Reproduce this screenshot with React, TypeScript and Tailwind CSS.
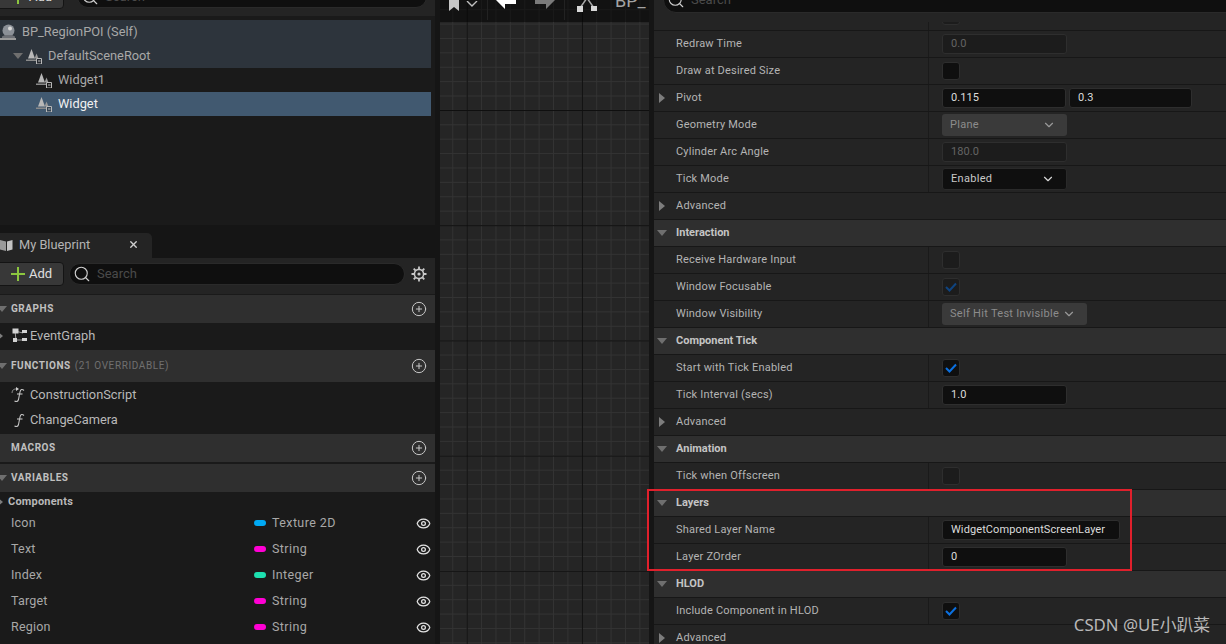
import type { ReactNode } from 'react';
import { ChevronDown, CirclePlus, Eye, Search, X } from 'lucide-react';

function ArrowDown({ className = '' }: { className?: string }) {
  return (
    <svg className={`shrink-0 ${className}`} width="10" height="6" viewBox="0 0 10 6">
      <path d="M0 0H10L5 6Z" fill="#6f6f6f" />
    </svg>
  );
}

function ArrowRight({ className = '' }: { className?: string }) {
  return (
    <svg className={`shrink-0 ${className}`} width="6" height="10" viewBox="0 0 6 10">
      <path d="M0 0L6 5L0 10Z" fill="#7d7d7d" />
    </svg>
  );
}

function PlusIcon() {
  return (
    <svg className="shrink-0" width="14" height="14" viewBox="0 0 14 14">
      <path d="M6 0H8V6H14V8H8V14H6V8H0V6H6Z" fill="#8cc63f" />
    </svg>
  );
}

function WidgetIcon() {
  return (
    <svg className="shrink-0" width="16" height="16" viewBox="0 0 16 16">
      <path d="M2 10.5L5.5 1L9 10.5Z" fill="#b8b8b8" />
      <path d="M8.5 10.5L10.5 5.5L12.5 10.5Z" fill="#9a9a9a" />
      <path d="M0 11.5H10V13H0Z" fill="#8a8a8a" />
      <path d="M10.5 10.5H15.5V16H10.5Z" fill="#1a1a1a" fillOpacity="0.35" stroke="#b8b8b8" strokeWidth="1" />
      <path d="M12 13H14.5" stroke="#b8b8b8" strokeWidth="1" />
    </svg>
  );
}

function SelfIcon() {
  return (
    <svg className="shrink-0" width="16" height="16" viewBox="0 0 16 16">
      <circle cx="8.5" cy="6.5" r="6" fill="#8b9097" />
      <circle cx="10" cy="4.5" r="2" fill="#d8d8d8" />
      <path d="M0 14H16V16H0Z" fill="#9a9a9a" />
      <path d="M2 12.5L5 11H12L15 12.5V14H2Z" fill="#6d7076" />
    </svg>
  );
}

function FuncIcon({ script = false }: { script?: boolean }) {
  return (
    <svg className="shrink-0" width="16" height="16" viewBox="0 0 16 16" fill="none">
      <path d="M13 3.5C11 1.5 9.5 2.5 9 5L7.5 12.5C7 14.5 5.5 15 3.5 14" stroke="#c4c4c4" strokeWidth="1.1" />
      <path d="M6 7H11.5" stroke="#c4c4c4" strokeWidth="1.1" />
      {script && <path d="M1 6C1 3 3 1.5 6 2" stroke="#8a8a8a" strokeWidth="1" />}
      {script && <path d="M5 0L8 2L5 4Z" fill="#d0d0d0" />}
    </svg>
  );
}

function GraphIcon() {
  return (
    <svg className="shrink-0" width="15" height="15" viewBox="0 0 15 15">
      <path d="M3 3L11 5M3 3L4 12M4 12L11 12" stroke="#9a9a9a" strokeWidth="1" fill="none" />
      <rect x="0.5" y="0.5" width="6" height="5" fill="#d2d2d2" />
      <rect x="10" y="2" width="5" height="3" fill="#d2d2d2" />
      <rect x="1" y="10" width="4" height="4" fill="#d2d2d2" />
      <rect x="10" y="10" width="5" height="3" fill="#d2d2d2" />
    </svg>
  );
}

function GearIcon() {
  return (
    <svg className="shrink-0" width="16" height="16" viewBox="0 0 16 16" fill="none">
      <circle cx="8" cy="8" r="4.6" stroke="#c8c8c8" strokeWidth="1.6" />
      <circle cx="8" cy="8" r="1.6" fill="#c8c8c8" />
      <path
        d="M8 0.5V3M8 13V15.5M0.5 8H3M13 8H15.5M2.7 2.7L4.5 4.5M11.5 11.5L13.3 13.3M13.3 2.7L11.5 4.5M4.5 11.5L2.7 13.3"
        stroke="#c8c8c8"
        strokeWidth="1.8"
      />
    </svg>
  );
}

function CheckBox({ state = 'off' }: { state?: 'off' | 'on' | 'dim' | 'offDark' }) {
  const bg = state === 'on' || state === 'offDark' ? 'bg-[#0f0f0f]' : 'bg-[#1c1c1c]';
  return (
    <div className={`w-[18px] h-[18px] shrink-0 rounded-[3px] border border-[#2e2e2e] flex items-center justify-center ${bg}`}>
      {(state === 'on' || state === 'dim') && (
        <svg width="12" height="10" viewBox="0 0 12 10" fill="none">
          <path d="M1 5L4.5 8.5L11 1.5" stroke={state === 'on' ? '#0b70e0' : '#0f4480'} strokeWidth="2" />
        </svg>
      )}
    </div>
  );
}

function Field({ text, width = 'w-[125px]', dim = false }: { text: string; width?: string; dim?: boolean }) {
  return (
    <div
      className={`h-[20px] rounded-[3px] border border-[#2e2e2e] pl-[8px] flex items-center text-[11px] tracking-[0.1px] ${width} ${
        dim ? 'bg-[#1c1c1c] text-[#646464]' : 'bg-[#0f0f0f] text-[#dcdcdc]'
      }`}
    >
      {text}
    </div>
  );
}

function Combo({ text, width = 'w-[125px]', dim = false }: { text: string; width?: string; dim?: boolean }) {
  return (
    <div
      className={`h-[22px] rounded-[3px] pl-[8px] pr-[11px] flex items-center justify-between text-[11px] tracking-[0.3px] ${width} ${
        dim ? 'bg-[#3a3a3a] text-[#8c8c8c]' : 'bg-[#0f0f0f] border border-[#2a2a2a] text-[#c8c8c8]'
      }`}
    >
      <span>{text}</span>
      <ChevronDown size={14} strokeWidth={2} color={dim ? '#9a9a9a' : '#d8d8d8'} />
    </div>
  );
}

type DetailRow = { label: string; value?: ReactNode; header?: boolean; arrow?: boolean };

const DETAIL_ROWS: DetailRow[] = [
  { label: 'Redraw Time', value: <Field text="0.0" dim /> },
  { label: 'Draw at Desired Size', value: <CheckBox state="offDark" /> },
  {
    label: 'Pivot',
    arrow: true,
    value: (
      <div className="flex gap-[3px]">
        <Field text="0.115" width="w-[124px]" />
        <Field text="0.3" width="w-[123px]" />
      </div>
    ),
  },
  { label: 'Geometry Mode', value: <Combo text="Plane" dim /> },
  { label: 'Cylinder Arc Angle', value: <Field text="180.0" dim /> },
  { label: 'Tick Mode', value: <Combo text="Enabled" /> },
  { label: 'Advanced', arrow: true },
  { label: 'Interaction', header: true },
  { label: 'Receive Hardware Input', value: <CheckBox /> },
  { label: 'Window Focusable', value: <CheckBox state="dim" /> },
  { label: 'Window Visibility', value: <Combo text="Self Hit Test Invisible" width="w-[145px]" dim /> },
  { label: 'Component Tick', header: true },
  { label: 'Start with Tick Enabled', value: <CheckBox state="on" /> },
  { label: 'Tick Interval (secs)', value: <Field text="1.0" /> },
  { label: 'Advanced', arrow: true },
  { label: 'Animation', header: true },
  { label: 'Tick when Offscreen', value: <CheckBox /> },
  { label: 'Layers', header: true },
  { label: 'Shared Layer Name', value: <Field text="WidgetComponentScreenLayer" width="w-[178px]" /> },
  { label: 'Layer ZOrder', value: <Field text="0" /> },
  { label: 'HLOD', header: true },
  { label: 'Include Component in HLOD', value: <CheckBox state="on" /> },
  { label: 'Advanced', arrow: true },
];

function DetailsRow({ row }: { row: DetailRow }) {
  if (row.header) {
    return (
      <div className="h-[27px] shrink-0 flex items-center bg-[#2f2f2f] border-b border-[#171717] text-[11px] font-bold text-[#c4c4c4]">
        <ArrowDown className="ml-[3px] mr-[9px]" />
        {row.label}
      </div>
    );
  }
  return (
    <div className="h-[27px] shrink-0 flex items-center bg-[#242424] border-b border-[#171717] text-[11px] tracking-[0.2px] text-[#b4b4b4]">
      <div className={`h-full w-[275px] shrink-0 flex items-center ${row.value ? 'border-r border-[#1a1a1a]' : ''}`}>
        <span className="w-[22px] pl-[5px]">{row.arrow && <ArrowRight />}</span>
        {row.label}
      </div>
      <div className="pl-[13px] flex items-center">{row.value}</div>
    </div>
  );
}

function DetailsPanel() {
  return (
    <div className="flex-1 ml-[5px] flex flex-col bg-[#242424] overflow-hidden">
      <div className="h-[13px] shrink-0 flex items-end pl-[9px] overflow-hidden bg-[#242424]">
        <div className="h-[26px] flex-1 -mr-[20px] shrink-0 rounded-full bg-[#0f0f0f] border border-[#2a2a2a] flex items-center pl-[3px] gap-[6px] text-[13px] text-[#4a4a4a]">
          <Search size={18} strokeWidth={1.5} color="#d0d0d0" />
          Search
        </div>
      </div>
      <div className="h-[9px] shrink-0" />
      <div className="h-[9px] shrink-0 flex overflow-hidden items-end border-b border-[#171717]">
        <div className="w-[275px] h-full shrink-0 border-r border-[#1a1a1a]" />
        <div className="pl-[13px] h-full flex items-end mb-[5px]">
          <CheckBox />
        </div>
      </div>
      {DETAIL_ROWS.map((row, i) => (
        <DetailsRow key={i} row={row} />
      ))}
    </div>
  );
}

function GraphPanel() {
  return (
    <div className="relative w-[209px] shrink-0 overflow-hidden bg-[#252525] bg-[linear-gradient(to_right,#0f0f0f_1px,transparent_1px),linear-gradient(to_bottom,#0f0f0f_1px,transparent_1px),linear-gradient(to_right,#333333_1px,transparent_1px),linear-gradient(to_bottom,#333333_1px,transparent_1px)] bg-[size:115.2px_115.2px,115.2px_115.2px,14.4px_14.4px,14.4px_14.4px] bg-[position:26.7px_0,0_110px,12.3px_0,0_9.2px]">
      <div className="absolute inset-x-0 top-0 h-[22px] bg-black/50 overflow-hidden">
        <div className="flex items-start h-full text-[#9a9a9a]">
          <svg className="ml-[9px] shrink-0" width="10" height="11" viewBox="0 0 10 11">
            <path d="M0 -4H10V11L5 7L0 11Z" fill="#c8c8c8" />
          </svg>
          <svg className="ml-[7px] mt-[1px] shrink-0" width="12" height="6" viewBox="0 0 12 6" fill="none">
            <path d="M1 0L6 5L11 0" stroke="#c0c0c0" strokeWidth="1.4" />
          </svg>
          <div className="ml-[9px] w-px h-[20px] bg-[#222222] shrink-0" />
          <svg className="ml-[8px] shrink-0" width="20" height="10" viewBox="0 0 20 10">
            <path d="M20 -3V4H9V9L0 0L9 -8V-3Z" fill="#ffffff" />
          </svg>
          <svg className="ml-[19px] shrink-0" width="20" height="10" viewBox="0 0 20 10">
            <path d="M0 -3V4H11V9L20 0L11 -8V-3Z" fill="#7a7a7a" />
          </svg>
          <div className="ml-[9px] w-px h-[20px] bg-[#222222] shrink-0" />
          <svg className="ml-[10px] shrink-0" width="25" height="13" viewBox="0 0 25 13">
            <path d="M5 8L12 -2L19 8" stroke="#a8a8a8" strokeWidth="1.5" fill="none" />
            <rect x="2" y="6" width="6" height="6" fill="#d8d8d8" />
            <rect x="16" y="6" width="6" height="5" fill="#d8d8d8" />
          </svg>
          <span className="ml-[15px] text-[18px] leading-[20px] -mt-[9px] text-[#a4a4a4] font-['Roboto',sans-serif] shrink-0">BP_</span>
        </div>
      </div>
    </div>
  );
}

function TreeRow({ bg, text, pad, children, color }: { bg: string; text: string; pad: string; children: ReactNode; color: string }) {
  return (
    <div className={`h-[24px] w-[431px] flex items-center text-[12.8px] ${bg} ${pad} ${color}`}>
      {children}
      <span>{text}</span>
    </div>
  );
}

function SectionHeader({ title, note, arrow = true, height }: { title: string; note?: string; arrow?: boolean; height: string }) {
  return (
    <div className={`shrink-0 flex items-center bg-[#2f2f2f] pl-[11px] pr-[8px] relative text-[10px] font-bold tracking-[0.55px] text-[#c0c0c0] ${height}`}>
      {arrow && <ArrowDown className="absolute left-0 top-1/2 -mt-[3px] -translate-x-[3px]" />}
      <span className="pb-[2px]">{title}</span>
      {note && <span className="ml-[4px] pb-[2px] font-normal tracking-[0.6px] text-[#707070]">{note}</span>}
      <CirclePlus size={16} color="#c8c8c8" strokeWidth={1.5} className="ml-auto" />
    </div>
  );
}

const VARIABLES = [
  { name: 'Icon', type: 'Texture 2D', color: 'bg-[#00a9f4]' },
  { name: 'Text', type: 'String', color: 'bg-[#ff00d4]' },
  { name: 'Index', type: 'Integer', color: 'bg-[#1de0b0]' },
  { name: 'Target', type: 'String', color: 'bg-[#ff00d4]' },
  { name: 'Region', type: 'String', color: 'bg-[#ff00d4]' },
];

function AddButton() {
  return (
    <div className="h-[24px] w-[66px] -ml-[2px] shrink-0 rounded-r-[4px] bg-[#383838] border border-[#141414] flex items-center pl-[12px] gap-[4px] text-[13px] text-[#e0e0e0]">
      <PlusIcon />
      Add
    </div>
  );
}

function LeftColumn() {
  return (
    <div className="w-[435px] shrink-0 flex flex-col">
      {/* components tree */}
      <div className="h-[225px] shrink-0 bg-[#1a1a1a] flex flex-col">
        <div className="h-[16px] shrink-0 bg-[#242424] overflow-hidden">
          <div className="h-[9px] flex items-end overflow-hidden">
            <AddButton />
            <div className="h-[22px] ml-[13px] mb-[1px] w-[350px] shrink-0 rounded-full bg-[#0f0f0f] border border-[#2a2a2a] flex items-center pl-[3px] gap-[6px] text-[13px] text-[#4a4a4a]">
              <Search size={18} strokeWidth={1.5} color="#d0d0d0" />
              Search
            </div>
          </div>
        </div>
        <div className="h-[4px] shrink-0" />
        <TreeRow bg="bg-[#2d343c]" text="BP_RegionPOI (Self)" pad="gap-[6px]" color="text-[#a8a8a8]">
          <SelfIcon />
        </TreeRow>
        <TreeRow bg="bg-[#2d343c]" text="DefaultSceneRoot" pad="pl-[13px]" color="text-[#a8a8a8]">
          <ArrowDown className="mr-[3px]" />
          <WidgetIcon />
          <span className="w-[6px]" />
        </TreeRow>
        <TreeRow bg="bg-[#1a1a1a]" text="Widget1" pad="pl-[36px] gap-[6px]" color="text-[#a8a8a8]">
          <WidgetIcon />
        </TreeRow>
        <TreeRow bg="bg-[#415970]" text="Widget" pad="pl-[36px] gap-[6px]" color="text-[#f0f0f0]">
          <WidgetIcon />
        </TreeRow>
      </div>

      <div className="h-[8px] shrink-0" />

      {/* my blueprint */}
      <div className="h-[25px] w-[152px] shrink-0 rounded-tr-[5px] bg-[#242424] flex items-center pb-[2px] text-[12.8px] text-[#b4b4b4]">
        <svg className="shrink-0" width="13" height="12" viewBox="0 0 13 12">
          <path d="M0 1L6 2.5V12L0 10.5Z" fill="#9a9a9a" />
          <path d="M7 2.5L12.5 1V10.5L7 12Z" fill="#c4c4c4" />
        </svg>
        <span className="ml-[6px]">My Blueprint</span>
        <X size={11} strokeWidth={3} color="#d0d0d0" className="ml-auto mr-[13px]" />
      </div>
      <div className="flex-1 min-h-0 bg-[#1a1a1a] flex flex-col overflow-hidden">
        <div className="h-[36px] shrink-0 bg-[#242424] flex items-center pr-[8px] pb-[4px]">
          <AddButton />
          <div className="h-[22px] ml-[5px] flex-1 rounded-full bg-[#0f0f0f] border border-[#2a2a2a] flex items-center pl-[3px] gap-[6px] text-[13px] text-[#4a4a4a]">
            <Search size={18} strokeWidth={1.5} color="#d0d0d0" />
            Search
          </div>
          <span className="ml-[6px]">
            <GearIcon />
          </span>
        </div>
        <div className="h-px shrink-0" />
        <SectionHeader title="GRAPHS" height="h-[28px]" />
        <div className="h-[27px] shrink-0 flex items-center pl-[12px] gap-[3px] pb-[2px] relative text-[12.8px] text-[#b8b8b8]">
          <ArrowRight className="absolute left-0 -translate-x-[3px]" />
          <GraphIcon />
          EventGraph
        </div>
        <SectionHeader title="FUNCTIONS" note="(21 OVERRIDABLE)" height="h-[32px]" />
        <div className="h-[25px] shrink-0 flex items-center pl-[11px] gap-[3px] text-[12.8px] text-[#b8b8b8]">
          <FuncIcon script />
          ConstructionScript
        </div>
        <div className="h-[26px] shrink-0 flex items-center pl-[11px] gap-[3px] text-[12.8px] text-[#b8b8b8]">
          <FuncIcon />
          ChangeCamera
        </div>
        <div className="h-px shrink-0" />
        <SectionHeader title="MACROS" arrow={false} height="h-[28px]" />
        <div className="h-[2px] shrink-0" />
        <SectionHeader title="VARIABLES" height="h-[28px]" />
        <div className="h-[18px] shrink-0 flex items-center pl-[8px] pt-[2px] relative text-[11px] font-bold tracking-[0.2px] text-[#b8b8b8]">
          <ArrowRight className="absolute left-0 -translate-x-[3px]" />
          Components
        </div>
        {VARIABLES.map((v) => (
          <div key={v.name} className="h-[26px] shrink-0 flex items-center pl-[11px] text-[12.5px] text-[#a8a8a8]">
            <span className="w-[243px] shrink-0 tracking-[0.2px]">{v.name}</span>
            <span className={`w-[12px] h-[6px] rounded-full shrink-0 ${v.color}`} />
            <span className="ml-[6px] tracking-[0.4px]">{v.type}</span>
            <Eye size={15} color="#e4e4e4" strokeWidth={2} className="ml-auto mr-[4px]" />
          </div>
        ))}
      </div>
    </div>
  );
}

export default function App() {
  return (
    <div className="relative h-[644px] w-[1226px] overflow-hidden flex bg-[#151515] font-['Roboto',sans-serif]">
      <LeftColumn />
      <div className="w-[5px] shrink-0" />
      <GraphPanel />
      <DetailsPanel />
      {/* annotation drawn on top of the screenshot */}
      <div className="absolute left-[647px] top-[489px] w-[485px] h-[82px] border-2 border-[#e0202c]" />
      <span className="absolute right-[16px] top-[614px] text-[16.8px] leading-[22px] text-[#b8b8b8] font-['Noto_Sans','Noto_Sans_CJK_SC',sans-serif]">
        CSDN @UE小趴菜
      </span>
    </div>
  );
}
